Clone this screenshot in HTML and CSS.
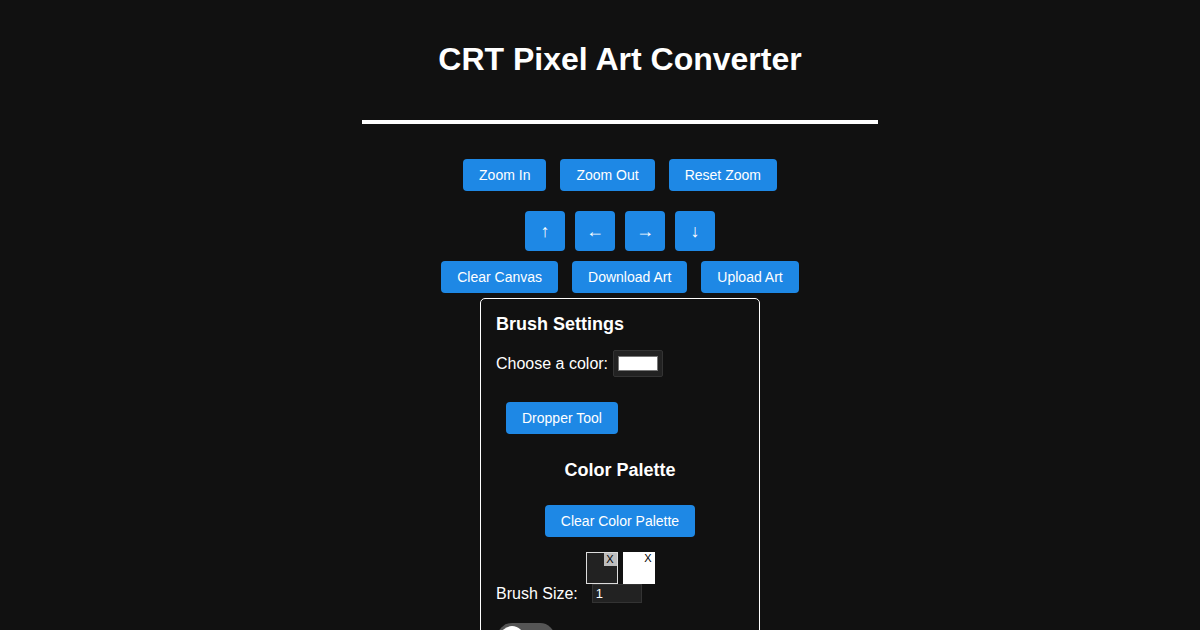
FILE: index.html
```html
<!DOCTYPE html>
<html>
<head>
<meta charset="utf-8">
<title>CRT Pixel Art Converter</title>
<link rel="stylesheet" href="styles.css">
</head>
<body>
<div class="page">
  <h1 class="title">CRT Pixel Art Converter</h1>
  <div class="canvas"></div>
  <div class="row row-zoom">
    <button class="btn">Zoom In</button>
    <button class="btn">Zoom Out</button>
    <button class="btn">Reset Zoom</button>
  </div>
  <div class="row row-arrows">
    <button class="btn arrow">↑</button>
    <button class="btn arrow">←</button>
    <button class="btn arrow">→</button>
    <button class="btn arrow">↓</button>
  </div>
  <div class="row row-file">
    <button class="btn">Clear Canvas</button>
    <button class="btn">Download Art</button>
    <button class="btn">Upload Art</button>
  </div>
  <div class="panel">
    <h3 class="panel-title">Brush Settings</h3>
    <div class="color-row">
      <label class="label">Choose a color:</label>
      <span class="color-input"><span class="color-fill"></span></span>
    </div>
    <div class="dropper-row">
      <button class="btn">Dropper Tool</button>
    </div>
    <h3 class="palette-title">Color Palette</h3>
    <div class="center-row">
      <button class="btn">Clear Color Palette</button>
    </div>
    <div class="swatches">
      <div class="swatch swatch-dark selected"><span class="swatch-x">X</span></div>
      <div class="swatch swatch-white"><span class="swatch-x">X</span></div>
    </div>
    <div class="size-row">
      <label class="label">Brush Size:</label>
      <span class="num-input">1</span>
    </div>
    <div class="toggle-row">
      <span class="toggle"><span class="knob"></span></span>
    </div>
  </div>
</div>
</body>
</html>
```
FILE: styles.css
```css
html, body {
  margin: 0;
  padding: 0;
  background: #111111;
  color: #ffffff;
  font-family: "Liberation Sans", Arial, sans-serif;
  overflow: hidden;
}
.page {
  display: flex;
  flex-direction: column;
  align-items: center;
  padding: 20px 0 0 40px;
}
.title {
  font-size: 32px;
  font-weight: bold;
  margin: 21px 0 0 0;
  line-height: 37px;
}
.canvas {
  width: 512px;
  height: 0;
  border: 2px solid #ffffff;
  margin-top: 42px;
}
.row {
  display: flex;
  justify-content: center;
}
.row-zoom {
  gap: 14px;
  margin-top: 35px;
}
.row-arrows {
  gap: 10px;
  margin-top: 20px;
}
.row-file {
  gap: 14px;
  margin-top: 10px;
}
.btn {
  background: #1e88e5;
  color: #ffffff;
  border: none;
  border-radius: 4px;
  font-family: "Liberation Sans", Arial, sans-serif;
  font-size: 14px;
  line-height: 16px;
  padding: 8px 16px;
  margin: 0;
  cursor: pointer;
}
.arrow {
  width: 40px;
  height: 40px;
  padding: 0;
  font-size: 18px;
  line-height: 40px;
  font-family: "Liberation Sans", "DejaVu Sans", sans-serif;
}
.panel {
  box-sizing: border-box;
  width: 280px;
  border: 1px solid #ffffff;
  border-radius: 5px;
  padding: 15px;
  margin-top: 5px;
  height: 400px;
}
.panel-title {
  font-size: 18px;
  font-weight: bold;
  margin: 0 0 15px 0;
  line-height: 21px;
}
.color-row {
  display: flex;
  align-items: center;
  gap: 5px;
  margin-bottom: 15px;
}
.label {
  font-size: 16px;
}
.color-input {
  box-sizing: border-box;
  width: 50px;
  height: 27px;
  background: #222222;
  border: 1px solid #333333;
  display: flex;
  align-items: center;
  justify-content: center;
  border-radius: 2px;
}
.color-fill {
  width: 38px;
  height: 13px;
  background: #ffffff;
  border: 1px solid #777777;
}
.dropper-row {
  padding: 10px;
}
.palette-title {
  font-size: 18px;
  font-weight: bold;
  text-align: center;
  margin: 16px 0 0 0;
  line-height: 21px;
}
.center-row {
  display: flex;
  justify-content: center;
  padding: 10px;
  margin-top: 14px;
}
.swatches {
  display: flex;
  justify-content: center;
  gap: 5px;
  margin-top: 5px;
}
.swatch {
  box-sizing: border-box;
  width: 32px;
  height: 32px;
  position: relative;
}
.swatch-dark {
  background: #222222;
}
.swatch-white {
  background: #ffffff;
}
.selected {
  border: 1px solid #dddddd;
}
.swatch-x {
  position: absolute;
  top: 0;
  right: 0;
  width: 13px;
  height: 13px;
  background: rgba(255, 255, 255, 0.7);
  color: #000000;
  font-size: 11px;
  line-height: 13px;
  text-align: center;
}
.size-row {
  display: flex;
  align-items: center;
  gap: 14px;
}
.num-input {
  box-sizing: border-box;
  width: 50px;
  height: 19px;
  background: #222222;
  border: 1px solid #333333;
  font-size: 13px;
  line-height: 17px;
  padding-left: 3px;
}
.toggle-row {
  margin-top: 20px;
}
.toggle {
  display: block;
  width: 58px;
  height: 30px;
  border-radius: 15px;
  background: #555555;
  position: relative;
  margin-left: 1px;
}
.knob {
  position: absolute;
  left: 3px;
  top: 3px;
  width: 24px;
  height: 24px;
  border-radius: 50%;
  background: #ffffff;
}
```
